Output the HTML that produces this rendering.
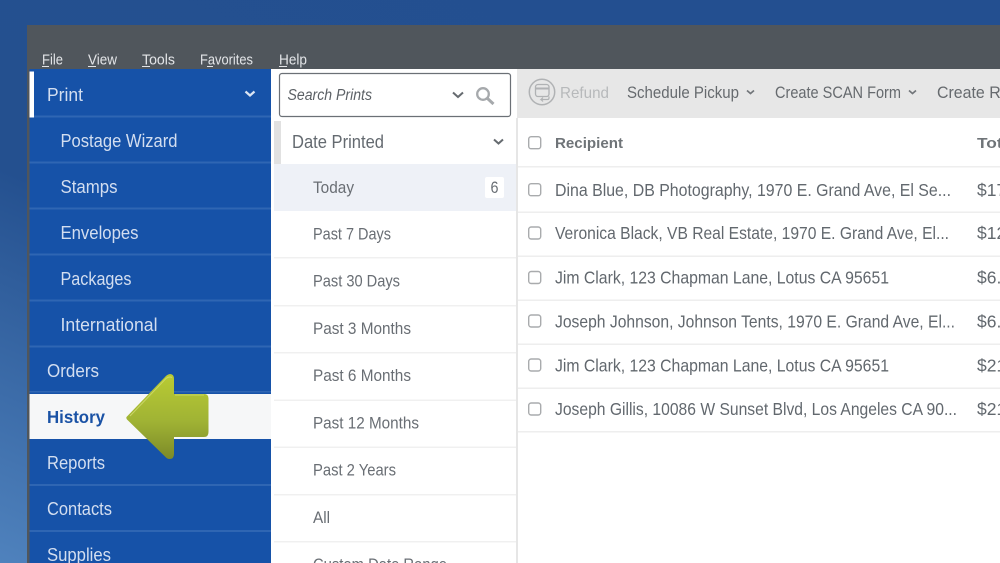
<!DOCTYPE html>
<html><head><meta charset="utf-8"><style>
html,body{margin:0;padding:0;width:1000px;height:563px;overflow:hidden;background:#fff}
svg{display:block;filter:blur(.3px)}
text{font-family:"Liberation Sans",sans-serif;}
.m{font-size:14.500px;fill:#e3e5e8}
.n{font-size:18.500px;fill:#d3def0}
.d{font-size:16.500px;fill:#696e74}
.r{font-size:17.500px;fill:#62686e}
.t{font-size:16.500px;fill:#666a6e}
.b{font-weight:bold;fill:#6f7478;font-size:15px}
</style></head><body>
<svg width="1000" height="563" viewBox="0 0 1000 563">
<defs>
<linearGradient id="bg" x1="0.75" y1="0" x2="0" y2="1"><stop offset="0" stop-color="#234f90"/><stop offset=".55" stop-color="#24508f"/><stop offset="1" stop-color="#4f82bd"/></linearGradient>
<linearGradient id="ar" x1="0" y1="0" x2="0" y2="1"><stop offset="0" stop-color="#b9cb33"/><stop offset=".55" stop-color="#a0b334"/><stop offset="1" stop-color="#7c8a28"/></linearGradient>
</defs>
<rect width="1000" height="563" fill="url(#bg)"/>
<rect x="27" y="25" width="973" height="538" fill="#50565c"/>
<rect x="29.500" y="69" width="241.500" height="494" fill="#1652a8"/>
<rect x="271" y="69" width="729" height="494" fill="#fff"/>

<text class="m" x="42" y="64.500" textLength="21" lengthAdjust="spacingAndGlyphs">File</text><rect x="42" y="66" width="7" height="1" fill="#e3e5e8"/>
<text class="m" x="88" y="64.500" textLength="29" lengthAdjust="spacingAndGlyphs">View</text><rect x="88" y="66" width="8" height="1" fill="#e3e5e8"/>
<text class="m" x="142" y="64.500" textLength="33" lengthAdjust="spacingAndGlyphs">Tools</text><rect x="142" y="66" width="8" height="1" fill="#e3e5e8"/>
<text class="m" x="200" y="64.500" textLength="53" lengthAdjust="spacingAndGlyphs">Favorites</text><rect x="207" y="66" width="6" height="1" fill="#e3e5e8"/>
<text class="m" x="279" y="64.500" textLength="28" lengthAdjust="spacingAndGlyphs">Help</text><rect x="279" y="66" width="8" height="1" fill="#e3e5e8"/>

<!-- sidebar separators -->
<g fill="#2f66b3">
<rect x="29.500" y="115.500" width="241.500" height="2"/><rect x="29.500" y="161.500" width="241.500" height="2"/><rect x="29.500" y="207.500" width="241.500" height="2"/><rect x="29.500" y="253.500" width="241.500" height="2"/><rect x="29.500" y="299.500" width="241.500" height="2"/><rect x="29.500" y="345.500" width="241.500" height="2"/><rect x="29.500" y="484" width="241.500" height="2"/><rect x="29.500" y="530" width="241.500" height="2"/>
</g>
<rect x="29.500" y="71.500" width="4.500" height="46" fill="#fff"/>
<rect x="29.500" y="394" width="241.500" height="45" fill="#f6f7f8"/>
<rect x="29.500" y="391" width="241.500" height="1.500" fill="#2f66b3"/>
<text class="n" x="47" y="101" textLength="36" lengthAdjust="spacingAndGlyphs">Print</text>
<path d="M245.500 91.500l4.500 4 4.500-4" fill="none" stroke="#dbe5f3" stroke-width="2.200"/>
<text class="n" x="60.500" y="147" textLength="117" lengthAdjust="spacingAndGlyphs">Postage Wizard</text>
<text class="n" x="60.500" y="193" textLength="57" lengthAdjust="spacingAndGlyphs">Stamps</text>
<text class="n" x="60.500" y="239" textLength="78" lengthAdjust="spacingAndGlyphs">Envelopes</text>
<text class="n" x="60.500" y="285" textLength="71" lengthAdjust="spacingAndGlyphs">Packages</text>
<text class="n" x="60.500" y="331" textLength="97" lengthAdjust="spacingAndGlyphs">International</text>
<text class="n" x="47" y="377" textLength="52" lengthAdjust="spacingAndGlyphs">Orders</text>
<text x="47" y="423" textLength="58" lengthAdjust="spacingAndGlyphs" style="font-size:17.500px;font-weight:bold;fill:#1a52a5">History</text>
<text class="n" x="47" y="469" textLength="58" lengthAdjust="spacingAndGlyphs">Reports</text>
<text class="n" x="47" y="515" textLength="65" lengthAdjust="spacingAndGlyphs">Contacts</text>
<text class="n" x="47" y="561" textLength="64" lengthAdjust="spacingAndGlyphs">Supplies</text>

<!-- arrow -->
<path d="M126.500 417 L165 377 Q167 374.500 170 374 Q174 374 174 379 L174 394 L204 394 Q208.500 394 208.500 398.500 L208.500 432 Q208.500 437 204 437 L174 437 L174 454 Q174 459 169.500 459 Q167 459 165 456.500 L127 419.500 Q126 418 126.500 417Z" fill="url(#ar)"/>
<path d="M130 416 L166 378.500 Q169 376 172 377.500 M175 395 L204 395" fill="none" stroke="#d2dc72" stroke-width="1" opacity=".8"/>

<!-- search -->
<rect x="279.500" y="73.500" width="231" height="43" rx="2.500" fill="#fff" stroke="#6b7076" stroke-width="1.200"/>
<text x="287.500" y="100" textLength="84.500" lengthAdjust="spacingAndGlyphs" style="font-size:15.500px;font-style:italic;fill:#5c6166">Search Prints</text>
<path d="M453 92.500l5 4.500 5-4.500" fill="none" stroke="#666b70" stroke-width="2"/>
<circle cx="483" cy="94" r="5.800" fill="none" stroke="#a6a9ac" stroke-width="2.300"/>
<path d="M487.500 98.500l6 5.500" stroke="#a6a9ac" stroke-width="3" fill="none"/>

<!-- filter panel -->
<rect x="274" y="121" width="7" height="43" fill="#e1e1e1"/>
<text x="292" y="148" textLength="92" lengthAdjust="spacingAndGlyphs" style="font-size:18px;fill:#646a70">Date Printed</text>
<path d="M494 139.500l4.500 4 4.500-4" fill="none" stroke="#666b70" stroke-width="2"/>
<rect x="274" y="164" width="242" height="47" fill="#eef1f7"/>
<rect x="485" y="177" width="19" height="21" rx="2" fill="#fff"/>
<text class="d" x="490.500" y="193" textLength="8" lengthAdjust="spacingAndGlyphs">6</text>
<text class="d" x="313" y="193" textLength="41" lengthAdjust="spacingAndGlyphs">Today</text>
<text class="d" x="313" y="239.500" textLength="78" lengthAdjust="spacingAndGlyphs">Past 7 Days</text>
<text class="d" x="313" y="286.500" textLength="87" lengthAdjust="spacingAndGlyphs">Past 30 Days</text>
<text class="d" x="313" y="334" textLength="98" lengthAdjust="spacingAndGlyphs">Past 3 Months</text>
<text class="d" x="313" y="381" textLength="98" lengthAdjust="spacingAndGlyphs">Past 6 Months</text>
<text class="d" x="313" y="428.500" textLength="106" lengthAdjust="spacingAndGlyphs">Past 12 Months</text>
<text class="d" x="313" y="475.500" textLength="83" lengthAdjust="spacingAndGlyphs">Past 2 Years</text>
<text class="d" x="313" y="523" textLength="17" lengthAdjust="spacingAndGlyphs">All</text>
<text class="d" x="313" y="570" textLength="134" lengthAdjust="spacingAndGlyphs">Custom Date Range</text>
<g fill="#f0f0f0">
<rect x="274" y="257" width="242" height="1.500"/><rect x="274" y="305" width="242" height="1.500"/><rect x="274" y="352" width="242" height="1.500"/><rect x="274" y="399.500" width="242" height="1.500"/><rect x="274" y="446.500" width="242" height="1.500"/><rect x="274" y="494" width="242" height="1.500"/><rect x="274" y="541" width="242" height="1.500"/>
</g>
<rect x="516" y="118" width="2" height="445" fill="#e6e6e6"/>

<!-- toolbar -->
<rect x="517" y="69" width="483" height="49" fill="#e7e7e7"/>
<circle cx="542" cy="92" r="12.700" fill="none" stroke="#b0b2b4" stroke-width="1.500"/>
<rect x="535.500" y="84.500" width="13.500" height="12" rx="2.500" fill="none" stroke="#b0b2b4" stroke-width="1.300"/>
<path d="M535.500 88.500h13.500" stroke="#b0b2b4" stroke-width="2" fill="none"/>
<path d="M549 96.500v1.500q0 1.500-1.500 1.500h-6.500l2-2m-2 2l2 2" fill="none" stroke="#b0b2b4" stroke-width="1.200"/>
<text x="560" y="98" textLength="49" lengthAdjust="spacingAndGlyphs" style="font-size:16px;fill:#b7b9bb">Refund</text>
<text class="t" x="627" y="98" textLength="112" lengthAdjust="spacingAndGlyphs">Schedule Pickup</text>
<path d="M747 90.500l3.500 3 3.500-3" fill="none" stroke="#72767a" stroke-width="1.700"/>
<text class="t" x="775" y="98" textLength="126" lengthAdjust="spacingAndGlyphs">Create SCAN Form</text>
<path d="M909 90.500l3.500 3 3.500-3" fill="none" stroke="#72767a" stroke-width="1.700"/>
<text class="t" x="937" y="98" textLength="100" lengthAdjust="spacingAndGlyphs">Create Return</text>

<!-- table -->
<text class="b" x="555" y="148" textLength="68" lengthAdjust="spacingAndGlyphs">Recipient</text>
<text class="b" x="977" y="148" textLength="40" lengthAdjust="spacingAndGlyphs">Total</text>
<g fill="#eeeeee">
<rect x="518" y="166" width="482" height="1.500"/><rect x="518" y="211.500" width="482" height="1.500"/><rect x="518" y="255.500" width="482" height="1.500"/><rect x="518" y="299.500" width="482" height="1.500"/><rect x="518" y="343.500" width="482" height="1.500"/><rect x="518" y="387.500" width="482" height="1.500"/><rect x="518" y="431" width="482" height="1.500"/>
</g>
<g fill="#fff" stroke="#a9abad" stroke-width="1.400">
<rect x="528.700" y="136.700" width="12" height="12" rx="2.500"/>
<rect x="528.700" y="183.700" width="12" height="12" rx="2.500"/>
<rect x="528.700" y="227" width="12" height="12" rx="2.500"/>
<rect x="528.700" y="271.500" width="12" height="12" rx="2.500"/>
<rect x="528.700" y="315" width="12" height="12" rx="2.500"/>
<rect x="528.700" y="359" width="12" height="12" rx="2.500"/>
<rect x="528.700" y="403" width="12" height="12" rx="2.500"/>
</g>
<text class="r" x="555" y="196" textLength="396" lengthAdjust="spacingAndGlyphs">Dina Blue, DB Photography, 1970 E. Grand Ave, El Se...</text>
<text class="r" x="555" y="239" textLength="394" lengthAdjust="spacingAndGlyphs">Veronica Black, VB Real Estate, 1970 E. Grand Ave, El...</text>
<text class="r" x="555" y="283.500" textLength="334" lengthAdjust="spacingAndGlyphs">Jim Clark, 123 Chapman Lane, Lotus CA 95651</text>
<text class="r" x="555" y="327.500" textLength="400" lengthAdjust="spacingAndGlyphs">Joseph Johnson, Johnson Tents, 1970 E. Grand Ave, El...</text>
<text class="r" x="555" y="371.500" textLength="334" lengthAdjust="spacingAndGlyphs">Jim Clark, 123 Chapman Lane, Lotus CA 95651</text>
<text class="r" x="555" y="415" textLength="402" lengthAdjust="spacingAndGlyphs">Joseph Gillis, 10086 W Sunset Blvd, Los Angeles CA 90...</text>
<text class="r" x="977" y="196">$17.50</text>
<text class="r" x="977" y="239">$12.50</text>
<text class="r" x="977" y="283.500">$6.45</text>
<text class="r" x="977" y="327.500">$6.50</text>
<text class="r" x="977" y="371.500">$21.50</text>
<text class="r" x="977" y="415">$21.50</text>
</svg>
</body></html>
